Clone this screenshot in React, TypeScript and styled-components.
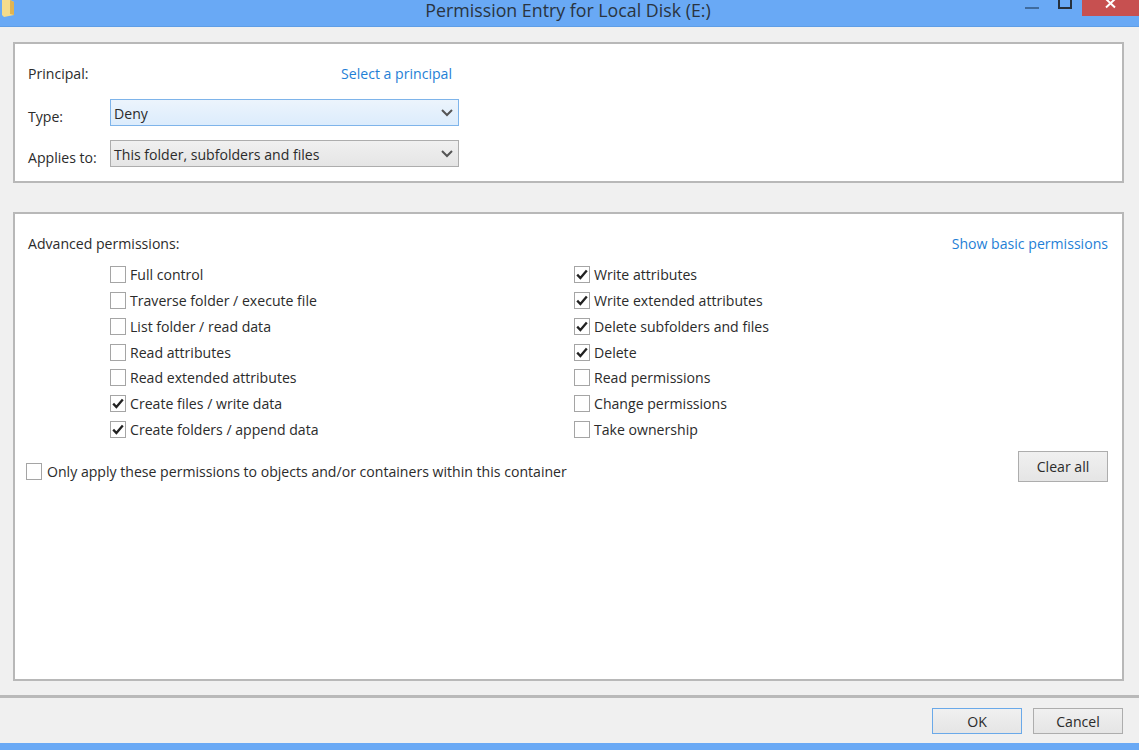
import React from 'react';
import styled, { createGlobalStyle } from 'styled-components';

const GlobalStyle = createGlobalStyle`
    html, body {
        margin: 0;
        padding: 0;
        overflow: hidden;
    }
    body {
        font-family: 'Open Sans', 'Noto Sans', sans-serif;
        font-size: 14.1px;
        color: #2b2b2b;
    }
`;

const leftPermissions = [
    { label: 'Full control', checked: false },
    { label: 'Traverse folder / execute file', checked: false },
    { label: 'List folder / read data', checked: false },
    { label: 'Read attributes', checked: false },
    { label: 'Read extended attributes', checked: false },
    { label: 'Create files / write data', checked: true },
    { label: 'Create folders / append data', checked: true },
];

const rightPermissions = [
    { label: 'Write attributes', checked: true },
    { label: 'Write extended attributes', checked: true },
    { label: 'Delete subfolders and files', checked: true },
    { label: 'Delete', checked: true },
    { label: 'Read permissions', checked: false },
    { label: 'Change permissions', checked: false },
    { label: 'Take ownership', checked: false },
];

const Check = ({ checked }: { checked?: boolean }) => (
    <CheckBox>
        {checked && (
            <svg width="12" height="11" viewBox="0 0 12 11">
                <path d="M1.2 5.6 L4.4 9 L10.8 1.4" fill="none" stroke="#222" strokeWidth="2.3" />
            </svg>
        )}
    </CheckBox>
);

const Chevron = () => (
    <svg width="12" height="8" viewBox="0 0 12 8">
        <path d="M1 1 L6 6 L11 1" fill="none" stroke="#555" strokeWidth="2" />
    </svg>
);

const App = () => (
    <Window>
        <GlobalStyle />
        <TitleBar>
            <FolderIcon width="15" height="17" viewBox="0 0 15 17">
                <path d="M1 0 H9 L13 2 V15 L8 16 L3 17 L1 15 Z" fill="#f5dc8c" />
                <path d="M9 0 L13 2 V15 L9 14 Z" fill="#dfb452" />
            </FolderIcon>
            <Title>Permission Entry for Local Disk (E:)</Title>
            <MinimizeIcon />
            <MaximizeIcon />
            <CloseButton>
                <svg width="11" height="9" viewBox="0 0 11 9">
                    <path d="M1 -1 L10 7.5 M10 -1 L1 7.5" stroke="#fff" strokeWidth="2" />
                </svg>
            </CloseButton>
        </TitleBar>
        <Content>
            <TopPanel>
                <PrincipalRow>
                    <Label>Principal:</Label>
                    <Link>Select a principal</Link>
                </PrincipalRow>
                <FieldRow>
                    <FieldLabel>Type:</FieldLabel>
                    <Select $focused>
                        Deny
                        <Chevron />
                    </Select>
                </FieldRow>
                <FieldRow>
                    <FieldLabel>Applies to:</FieldLabel>
                    <Select>
                        This folder, subfolders and files
                        <Chevron />
                    </Select>
                </FieldRow>
            </TopPanel>
            <PermissionsPanel>
                <PermissionsHeader>
                    <Label>Advanced permissions:</Label>
                    <Link>Show basic permissions</Link>
                </PermissionsHeader>
                <Columns>
                    <Column>
                        {leftPermissions.map((p) => (
                            <CheckRow key={p.label}>
                                <Check checked={p.checked} />
                                {p.label}
                            </CheckRow>
                        ))}
                    </Column>
                    <Column>
                        {rightPermissions.map((p) => (
                            <CheckRow key={p.label}>
                                <Check checked={p.checked} />
                                {p.label}
                            </CheckRow>
                        ))}
                    </Column>
                </Columns>
                <BottomRow>
                    <OnlyApplyRow>
                        <Check />
                        Only apply these permissions to objects and/or containers within this container
                    </OnlyApplyRow>
                    <ClearButton>Clear all</ClearButton>
                </BottomRow>
            </PermissionsPanel>
        </Content>
        <Footer>
            <OkButton>OK</OkButton>
            <FooterButton>Cancel</FooterButton>
        </Footer>
        <BottomEdge />
    </Window>
);

const Window = styled.div`
    width: 1139px;
    height: 750px;
    display: flex;
    flex-direction: column;
    background: #f0f0f0;
    overflow: hidden;
`;

const TitleBar = styled.div`
    height: 27px;
    flex: none;
    display: flex;
    align-items: flex-start;
    background: #69a9f5;
    border-bottom: 1px solid #5f9ee6;
    box-sizing: border-box;
    position: relative;
`;

const FolderIcon = styled.svg`
    flex: none;
    margin-left: 1px;
`;

const Title = styled.div`
    position: absolute;
    left: 0;
    right: 3px;
    top: 0;
    text-align: center;
    font-size: 17.8px;
    line-height: 20px;
    color: #2a3440;
`;

const MinimizeIcon = styled.div`
    width: 14px;
    height: 2px;
    margin: 7px 0 0 1009px;
    background: #3f6b9e;
`;

const MaximizeIcon = styled.div`
    width: 14px;
    height: 9px;
    margin-left: 19px;
    border: solid #26303c;
    border-width: 0 2px 2px;
    box-sizing: border-box;
`;

const CloseButton = styled.div`
    width: 57px;
    height: 16px;
    margin-left: 10px;
    background: #c75050;
    display: flex;
    justify-content: center;
`;

const Content = styled.div`
    flex: none;
    height: 671px;
    box-sizing: border-box;
    padding: 15px 15px 0 13px;
    display: flex;
    flex-direction: column;
    gap: 29px;
    border-bottom: 3px solid #b9b9b9;
`;

const Panel = styled.div`
    flex: none;
    background: #fff;
    border: 2px solid #b8b8b8;
    box-sizing: border-box;
    width: 1111px;
`;

const TopPanel = styled(Panel)`
    height: 141px;
    padding: 20px 0 0 13px;
`;

const Label = styled.span`
    line-height: 20px;
`;

const Link = styled.a`
    color: #1f7fd6;
    line-height: 20px;
    cursor: pointer;
`;

const PrincipalRow = styled.div`
    width: 424px;
    display: flex;
    justify-content: space-between;
    height: 35px;
`;

const FieldRow = styled.div`
    display: grid;
    grid-template-columns: 82px 349px;
    height: 41px;
`;

const FieldLabel = styled.span`
    line-height: 20px;
    padding-top: 8px;
`;

const Select = styled.div<{ $focused?: boolean }>`
    height: 27px;
    box-sizing: border-box;
    padding: 1px 5px 0 3px;
    display: flex;
    align-items: center;
    justify-content: space-between;
    border: 1px solid ${(p) => (p.$focused ? '#7eb4ea' : '#adadad')};
    background: ${(p) =>
        p.$focused
            ? 'linear-gradient(#ecf4fc, #dcecfc)'
            : 'linear-gradient(#f0f0f0, #e5e5e5)'};
`;

const PermissionsPanel = styled(Panel)`
    height: 469px;
    padding: 20px 14px 0 10px;
    display: flex;
    flex-direction: column;
`;

const PermissionsHeader = styled.div`
    display: flex;
    justify-content: space-between;
    padding-left: 3px;
    height: 28px;
`;

const Columns = styled.div`
    display: grid;
    grid-template-columns: 464px 1fr;
    padding-left: 85px;
`;

const Column = styled.div`
    display: grid;
    grid-auto-rows: 25.75px;
`;

const CheckRow = styled.div`
    display: flex;
    align-items: center;
    gap: 4px;
    white-space: nowrap;
`;

const CheckBox = styled.span`
    flex: none;
    width: 16px;
    height: 17px;
    box-sizing: border-box;
    border: 1px solid #a5a5a5;
    background: #fff;
    display: flex;
    align-items: center;
    justify-content: center;
`;

const BottomRow = styled.div`
    display: flex;
    justify-content: space-between;
    align-items: flex-end;
    margin-top: 8.5px;
`;

const OnlyApplyRow = styled(CheckRow)`
    height: 17px;
    margin: 0 0 2px 1px;
    gap: 5px;
`;

const Button = styled.button`
    font: inherit;
    color: inherit;
    padding: 0;
    box-sizing: border-box;
    border: 1px solid #adadad;
    background: linear-gradient(#f0f0f0, #e5e5e5);
`;

const ClearButton = styled(Button)`
    width: 90px;
    height: 31px;
`;

const Footer = styled.div`
    flex: 1;
    display: flex;
    justify-content: flex-end;
    gap: 11px;
    padding: 10px 16px 0 0;
`;

const FooterButton = styled(Button)`
    width: 90px;
    height: 26px;
`;

const OkButton = styled(FooterButton)`
    border-color: #6aa9e9;
`;

const BottomEdge = styled.div`
    flex: none;
    height: 7px;
    background: #69a9f5;
`;

export default App;
